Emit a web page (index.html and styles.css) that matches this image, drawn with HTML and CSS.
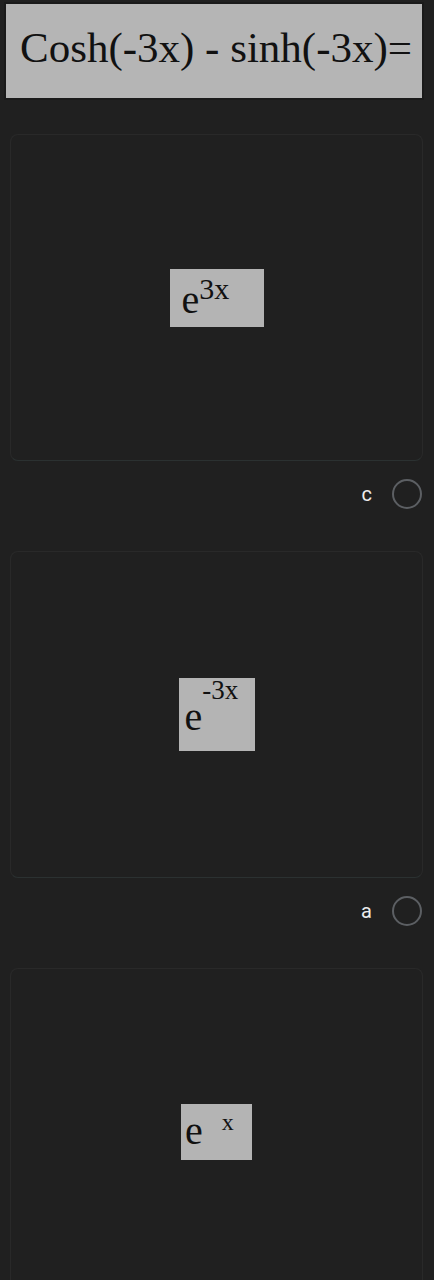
FILE: index.html
```html
<!DOCTYPE html>
<html>
<head>
<meta charset="utf-8">
<link rel="stylesheet" href="styles.css">
</head>
<body>
<div class="page">
  <div class="question">Cosh(-3x) - sinh(-3x)=</div>

  <div class="card">
    <div class="pic pic1"><span class="e">e</span><span class="sup sup1">3x</span></div>
  </div>
  <div class="choice"><span class="label">c</span><span class="radio"></span></div>

  <div class="card">
    <div class="pic pic2"><span class="e">e</span><span class="sup sup2">-3x</span></div>
  </div>
  <div class="choice"><span class="label">a</span><span class="radio"></span></div>

  <div class="card">
    <div class="pic pic3"><span class="e">e</span><span class="sup sup3">x</span></div>
  </div>
</div>
</body>
</html>
```

FILE: styles.css
```css
html, body {
  margin: 0;
  padding: 0;
  background: #202020;
}
.page {
  display: flex;
  flex-direction: column;
  padding-top: 4px;
  height: 1276px;
  overflow: hidden;
}
.page > * {
  flex-shrink: 0;
}
.question {
  margin-left: 6px;
  width: 416px;
  height: 94px;
  box-sizing: border-box;
  background: #b5b5b5;
  padding: 22px 0 0 14px;
  font-family: "Liberation Serif", serif;
  font-size: 43px;
  line-height: 1;
  color: #111;
  white-space: nowrap;
  box-shadow: 0 0 0 2px #1a1a1a;
}
.card {
  margin: 36px 0 0 10px;
  width: 413px;
  height: 327px;
  box-sizing: border-box;
  border: 1px solid #292929;
  border-bottom-color: #2b3131;
  border-radius: 8px;
  display: flex;
  align-items: center;
  justify-content: center;
}
.choice + .card {
  margin-top: 42px;
}
.choice {
  margin-top: 18px;
  height: 30px;
  display: flex;
  align-items: center;
  justify-content: flex-end;
  gap: 20px;
  padding-right: 12px;
}
.label {
  font-family: Roboto, "Liberation Sans", sans-serif;
  font-size: 20px;
  color: #ececec;
  line-height: 1;
}
.radio {
  width: 30px;
  height: 30px;
  box-sizing: border-box;
  border: 2.5px solid #5c5f63;
  border-radius: 50%;
}
.pic {
  background: #b4b4b4;
  display: flex;
  align-items: flex-start;
  box-sizing: border-box;
  font-family: "Liberation Serif", serif;
  color: #111;
}
.e {
  font-size: 40px;
  line-height: 1;
}
.sup {
  line-height: 1;
}
.pic1 {
  width: 94px;
  height: 58px;
  padding-left: 12px;
}
.pic1 .e { margin-top: 11px; }
.sup1 { font-size: 30px; margin-top: 5px; }
.pic2 {
  width: 76px;
  height: 73px;
  padding-left: 6px;
}
.pic2 .e { margin-top: 19px; }
.sup2 { font-size: 27px; margin-top: -1px; }
.pic3 {
  width: 71px;
  height: 56px;
  padding-left: 4px;
}
.pic3 .e { margin-top: 7px; }
.sup3 { font-size: 24px; margin-top: 6px; margin-left: 19px; }
```
